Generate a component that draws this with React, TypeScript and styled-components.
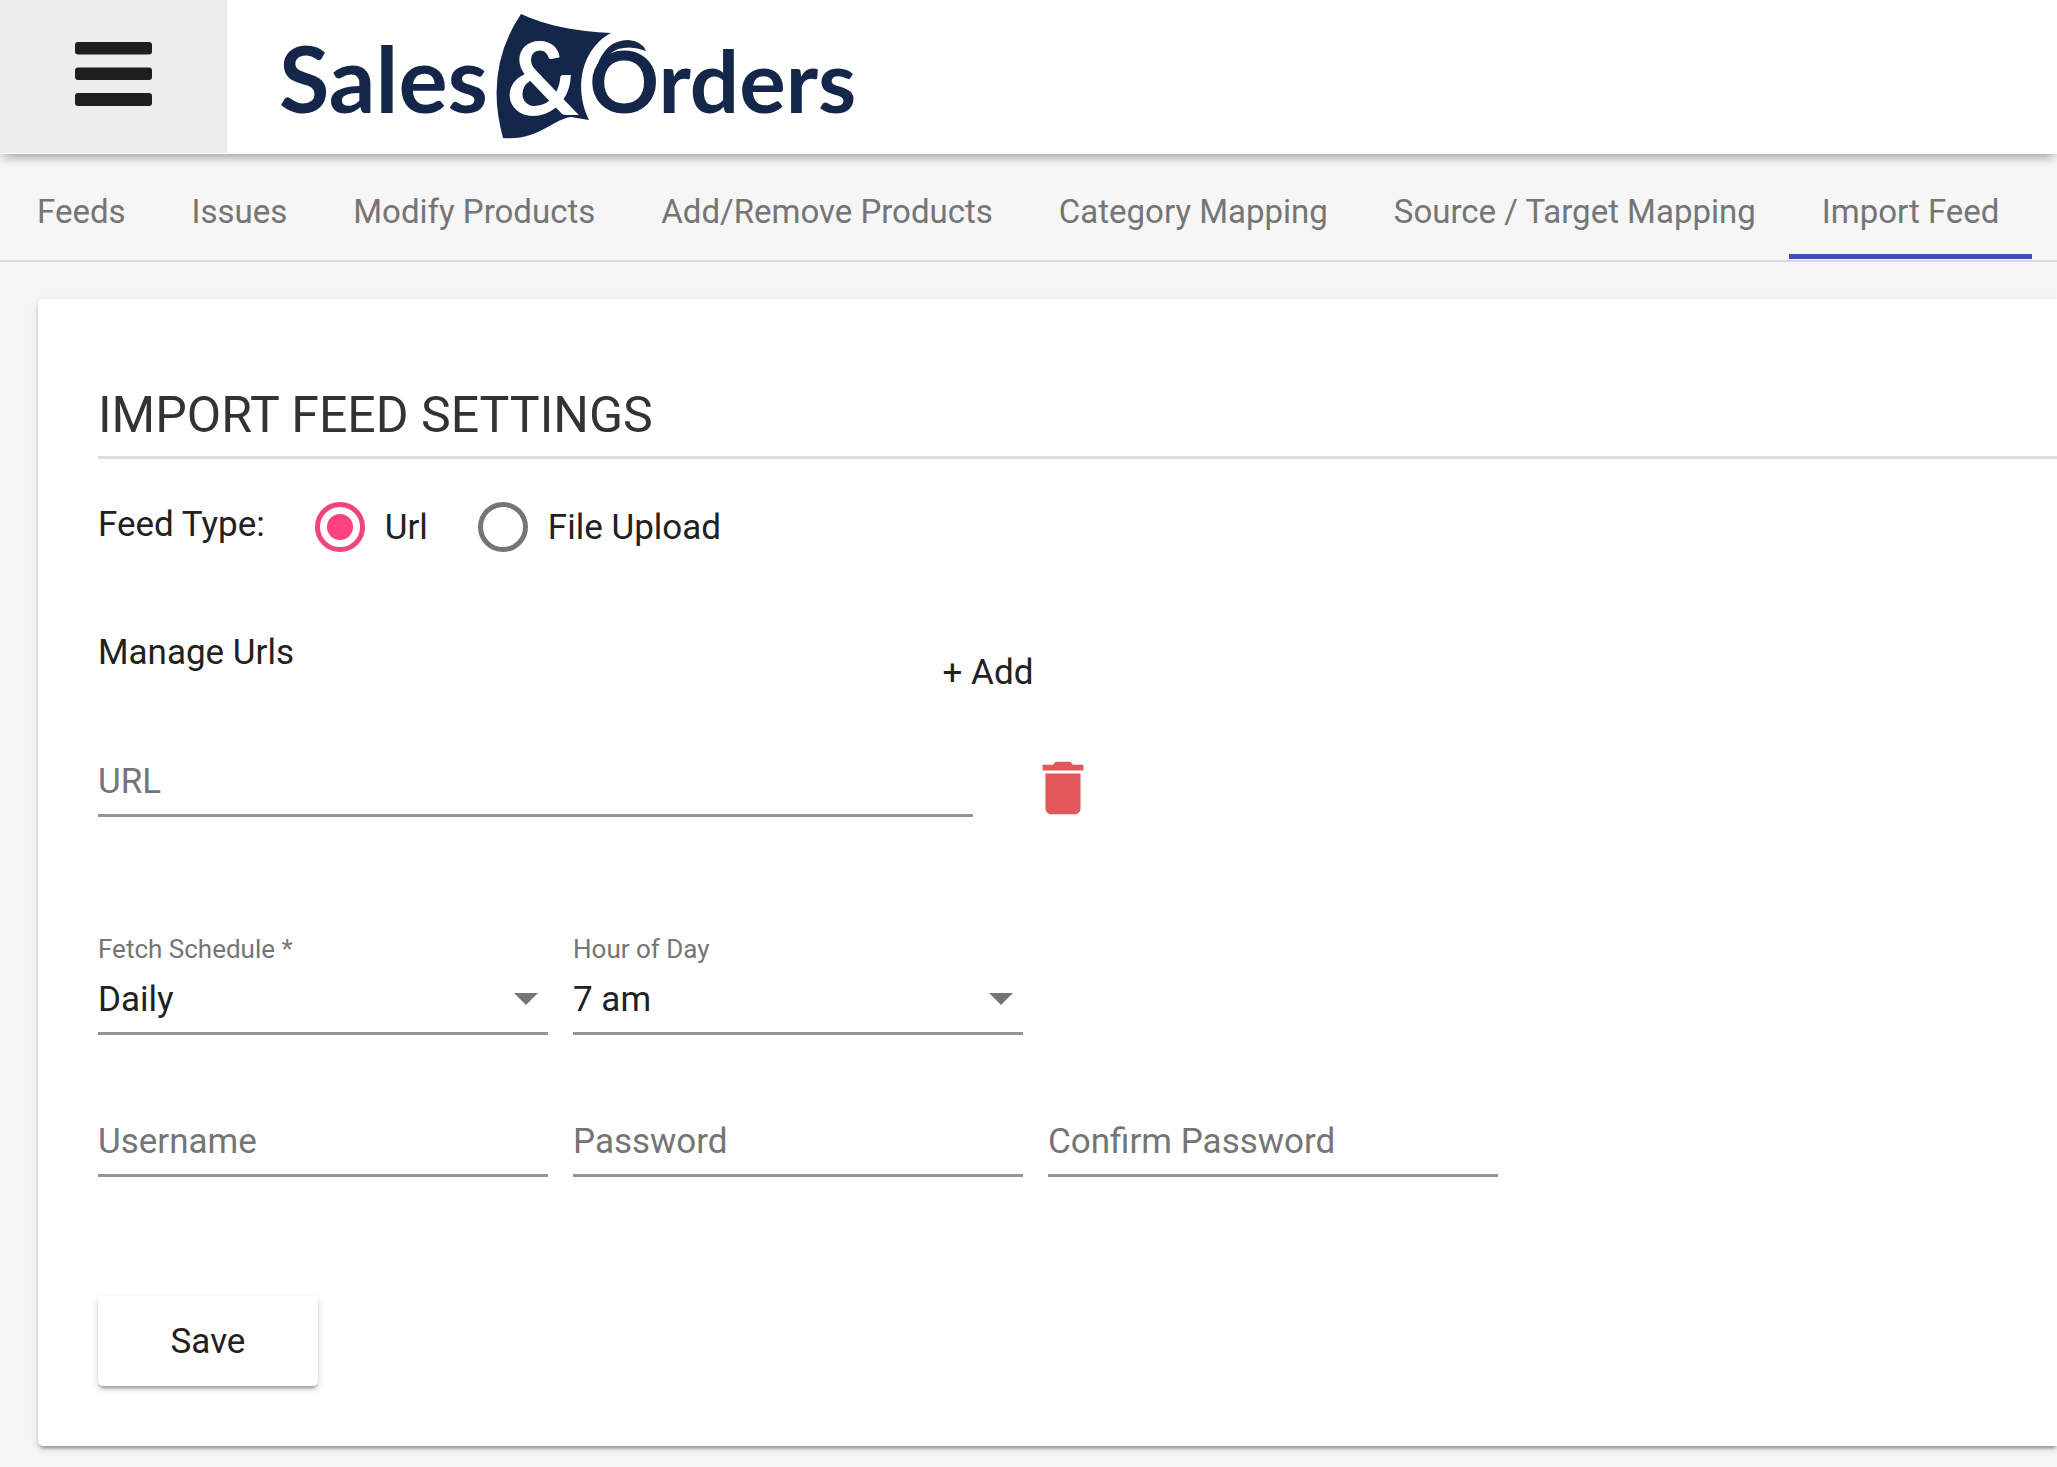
import React, { useState } from 'react';
import styled, { createGlobalStyle } from 'styled-components';

const GlobalStyle = createGlobalStyle`
  *, *::before, *::after { box-sizing: border-box; }
  body {
    margin: 0;
    background: #f6f6f6;
    color: #212121;
    font-family: Roboto, "Liberation Sans", sans-serif;
    font-size: 35px;
    line-height: 40px;
    overflow-x: hidden;
  }
  button, input, select { font: inherit; color: inherit; }
`;

const Header = styled.header`
  position: relative;
  display: flex;
  align-items: flex-start;
  height: 154px;
  background: #fff;
  box-shadow: 0 6px 10px -3px rgba(0, 0, 0, 0.36);
`;

const MenuButton = styled.button`
  display: flex;
  align-items: center;
  justify-content: center;
  width: 227px;
  height: 153px;
  padding: 0 0 5px;
  border: 0;
  background: #ededed;
  cursor: pointer;
`;

const LogoLink = styled.a`
  display: block;
  margin-left: 33px;
  svg { display: block; }
`;

const LogoText = styled.text`
  font-family: Lato, "Open Sans", sans-serif;
  font-weight: 700;
`;

const Tabs = styled.nav`
  display: flex;
  padding-left: 4px;
  border-bottom: 2px solid #d9d9d9;
  white-space: nowrap;
`;

const Tab = styled.a<{ $active?: boolean }>`
  flex: none;
  margin-bottom: 1px;
  padding: 38px 33px 22px;
  border-bottom: 5px solid ${(p) => (p.$active ? '#3f51b5' : 'transparent')};
  color: #757575;
  font-size: 33px;
  text-decoration: none;
`;

const Card = styled.main`
  margin: 37px 0 21px 38px;
  padding: 86px 0 60px 60px;
  border-radius: 5px 0 0 5px;
  background: #fff;
  box-shadow:
    0 5px 3px -3px rgba(0, 0, 0, 0.2),
    0 3px 3px 0 rgba(0, 0, 0, 0.14),
    0 3px 8px 0 rgba(0, 0, 0, 0.12);
`;

const Title = styled.h1`
  margin: 0;
  padding-bottom: 11px;
  border-bottom: 3px solid #ddd;
  color: #333;
  font-size: 50px;
  font-weight: 400;
  line-height: 60px;
`;

const FeedType = styled.div`
  display: flex;
  align-items: flex-start;
  gap: 50px;
  margin-top: 43px;
`;

const FeedTypeName = styled.span`
  line-height: 46px;
`;

const RadioLabel = styled.label`
  display: flex;
  align-items: flex-start;
  gap: 20px;
  line-height: 52px;
  cursor: pointer;
`;

const Radio = styled.input`
  appearance: none;
  display: grid;
  place-content: center;
  width: 50px;
  height: 50px;
  margin: 0;
  border: 5px solid #757575;
  border-radius: 50%;
  cursor: pointer;

  &:checked { border-color: #f0437f; }
  &:checked::before {
    content: "";
    width: 26px;
    height: 26px;
    border-radius: 50%;
    background: #ff4081;
  }
`;

const UrlSection = styled.section`
  max-width: 1000px;
  margin-top: 73px;
`;

const UrlHeader = styled.div`
  display: flex;
  align-items: flex-start;
  justify-content: space-between;
`;

const SectionTitle = styled.h2`
  margin: 0;
  font-size: 35px;
  font-weight: 400;
  line-height: 52px;
`;

const Button = styled.button<{ $raised?: boolean }>`
  width: 220px;
  padding: 26px 15px 24px;
  border: 0;
  border-radius: 5px;
  background: #fff;
  cursor: pointer;
  box-shadow: ${(p) =>
    p.$raised
      ? '0 5px 3px -3px rgba(0,0,0,.2), 0 3px 3px 0 rgba(0,0,0,.14), 0 3px 8px 0 rgba(0,0,0,.12)'
      : 'none'};
`;

const UrlRow = styled.div`
  display: flex;
  align-items: center;
  justify-content: space-between;
  margin-top: 36px;
`;

const IconButton = styled.button`
  display: block;
  padding: 0;
  border: 0;
  background: none;
  cursor: pointer;
  svg { display: block; }
`;

const FieldRow = styled.div<{ $space: number }>`
  display: flex;
  flex-wrap: wrap;
  gap: 25px;
  margin-top: ${(p) => p.$space}px;
`;

/* The control and its resting label share one grid cell. */
const Field = styled.div<{ $width: number }>`
  display: grid;
  grid-template-columns: minmax(0, 1fr);
  grid-template-areas: "control";
  width: ${(p) => p.$width}px;
`;

const TextInput = styled.input`
  grid-area: control;
  width: 100%;
  height: 58px;
  padding: 3px 0 12px;
  border: 0;
  border-bottom: 3px solid #949494;
  border-radius: 0;
  background: none;
  outline: 0;
`;

const RestingLabel = styled.label`
  grid-area: control;
  padding-top: 3px;
  color: #757575;
  pointer-events: none;

  ${TextInput}:not(:placeholder-shown) + & { visibility: hidden; }
`;

const SelectField = styled.div`
  display: flex;
  flex-direction: column;
  gap: 13px;
  width: 450px;
`;

const SmallLabel = styled.label`
  color: #757575;
  font-size: 26px;
  line-height: 30px;
`;

const Select = styled.select`
  appearance: none;
  grid-area: control;
  width: 100%;
  height: 58px;
  padding: 3px 40px 12px 0;
  border: 0;
  border-bottom: 3px solid #949494;
  border-radius: 0;
  background: none;
  outline: 0;
`;

const Arrow = styled.span`
  grid-area: control;
  align-self: start;
  justify-self: end;
  margin: 16px 10px 0 0;
  border: 12px solid transparent;
  border-top-color: #757575;
  border-bottom: 0;
  pointer-events: none;
`;

const Actions = styled.div`
  margin-top: 119px;
`;

const tabs = [
  'Feeds',
  'Issues',
  'Modify Products',
  'Add/Remove Products',
  'Category Mapping',
  'Source / Target Mapping',
  'Import Feed',
];

const hours = Array.from({ length: 24 }, (_, h) => `${h % 12 || 12} ${h < 12 ? 'am' : 'pm'}`);

function MenuIcon() {
  return (
    <svg width="77" height="64" viewBox="0 0 77 64" fill="#1f1f1f" aria-hidden="true">
      <rect width="77" height="12.5" rx="3" />
      <rect y="25.5" width="77" height="12.5" rx="3" />
      <rect y="51" width="77" height="13" rx="3" />
    </svg>
  );
}

function Logo() {
  return (
    <svg width="620" height="154" viewBox="260 0 620 154" fill="#142649" role="img" aria-label="Sales & Orders">
      <LogoText x="279" y="113" fontSize="92">Sales</LogoText>
      <path d="M521 14Q558 31 611 33C582 48 573 88 589 120L571 117C553 119 538 141 503 138Q484 69 521 14Z" />
      <LogoText x="506" y="115" fontSize="101" fill="#fff">&amp;</LogoText>
      <LogoText x="589" y="113" fontSize="87">Orders</LogoText>
      <path d="M597 66Q606 40 628 40Q642 41 646 51Q632 45 618 49Q606 54 601 66Z" />
    </svg>
  );
}

function TrashIcon() {
  return (
    <svg width="70" height="70" viewBox="0 0 24 24" fill="#e25858" aria-hidden="true">
      <path d="M6 19c0 1.1.9 2 2 2h8c1.1 0 2-.9 2-2V7H6v12zM19 4h-3.5l-1-1h-5l-1 1H5v2h14V4z" />
    </svg>
  );
}

function TextField({ id, label, width = 450, type = 'text' }: { id: string; label: string; width?: number; type?: string }) {
  return (
    <Field $width={width}>
      <TextInput id={id} type={type} placeholder=" " />
      <RestingLabel htmlFor={id}>{label}</RestingLabel>
    </Field>
  );
}

function Dropdown({ id, label, options, initial }: { id: string; label: string; options: string[]; initial: string }) {
  return (
    <SelectField>
      <SmallLabel htmlFor={id}>{label}</SmallLabel>
      <Field $width={450}>
        <Select id={id} defaultValue={initial}>
          {options.map((o) => (
            <option key={o}>{o}</option>
          ))}
        </Select>
        <Arrow />
      </Field>
    </SelectField>
  );
}

export default function App() {
  const [feedType, setFeedType] = useState('Url');

  return (
    <>
      <GlobalStyle />
      <Header>
        <MenuButton type="button" aria-label="Menu">
          <MenuIcon />
        </MenuButton>
        <LogoLink href="#">
          <Logo />
        </LogoLink>
      </Header>
      <Tabs>
        {tabs.map((t) => (
          <Tab key={t} href="#" $active={t === 'Import Feed'}>
            {t}
          </Tab>
        ))}
      </Tabs>
      <Card>
        <Title>IMPORT FEED SETTINGS</Title>
        <FeedType role="radiogroup" aria-labelledby="feed-type">
          <FeedTypeName id="feed-type">Feed Type:</FeedTypeName>
          {['Url', 'File Upload'].map((option) => (
            <RadioLabel key={option}>
              <Radio
                type="radio"
                name="feedType"
                checked={feedType === option}
                onChange={() => setFeedType(option)}
              />
              {option}
            </RadioLabel>
          ))}
        </FeedType>
        <UrlSection>
          <UrlHeader>
            <SectionTitle>Manage Urls</SectionTitle>
            <Button type="button">+ Add</Button>
          </UrlHeader>
          <UrlRow>
            <TextField id="url" label="URL" width={875} />
            <IconButton type="button" aria-label="Delete URL">
              <TrashIcon />
            </IconButton>
          </UrlRow>
        </UrlSection>
        <FieldRow $space={111}>
          <Dropdown id="schedule" label="Fetch Schedule *" options={['Daily', 'Weekly', 'Monthly']} initial="Daily" />
          <Dropdown id="hour" label="Hour of Day" options={hours} initial="7 am" />
        </FieldRow>
        <FieldRow $space={84}>
          <TextField id="username" label="Username" />
          <TextField id="password" label="Password" type="password" />
          <TextField id="confirm" label="Confirm Password" type="password" />
        </FieldRow>
        <Actions>
          <Button type="button" $raised>
            Save
          </Button>
        </Actions>
      </Card>
    </>
  );
}
